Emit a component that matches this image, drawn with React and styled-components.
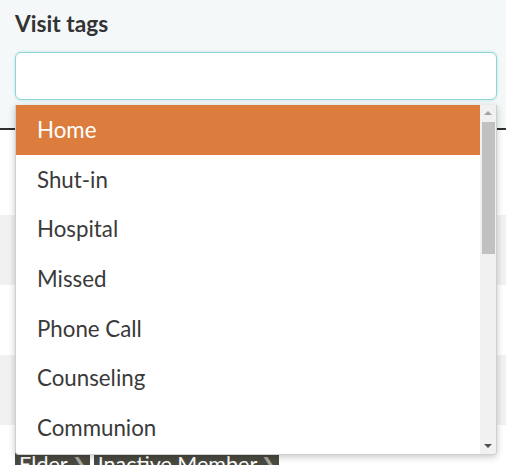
import React from 'react';
import styled, { createGlobalStyle } from 'styled-components';

const GlobalStyle = createGlobalStyle`
  html, body {
    margin: 0;
    padding: 0;
    background: #ffffff;
    font-family: Lato, "Open Sans", "Liberation Sans", sans-serif;
    overflow: hidden;
  }
`;

const Page = styled.div`
  position: relative;
  width: 506px;
  height: 465px;
  overflow: hidden;
  background: #ffffff;
`;

const Header = styled.div`
  background: #f4f8f9;
  padding: 11px 9px 0 15px;
  height: 117px;
  border-bottom: 2px solid #2f2f2f;
`;

const Label = styled.div`
  font-size: 22.7px;
  font-weight: 700;
  line-height: 26px;
  color: #333333;
`;

const Input = styled.div`
  margin-top: 15px;
  height: 46px;
  background: #ffffff;
  border: 1px solid #8fd4d4;
  border-radius: 6px;
  box-shadow: 0 0 3px rgba(110, 200, 200, 0.45);
`;

const Rows = styled.div`
  display: flex;
  flex-direction: column;
`;

const Row = styled.div`
  height: ${p => p.$h || 70}px;
  background: ${p => (p.$shade ? '#f1f1f1' : '#ffffff')};
  padding: 19px 15px 0;
  box-sizing: border-box;
`;

const Mark = styled.div`
  width: 22px;
  height: 24px;
  border: 2px solid #3a3a3a;
  border-radius: 2px;
  box-sizing: border-box;
`;

const Tags = styled.div`
  display: flex;
  gap: 4px;
  padding: 26px 15px 0;
`;

const Tag = styled.span`
  display: inline-flex;
  align-items: center;
  gap: 4px;
  background: #4a4a41;
  color: #ffffff;
  font-size: 21.5px;
  line-height: 26px;
  padding: 0 4px;
`;

const Chevron = styled.span`
  color: #a8a8a0;
  font-size: 17px;
`;

const Menu = styled.div`
  position: absolute;
  left: 15px;
  top: 105px;
  width: 482px;
  height: 350px;
  display: flex;
  background: #ffffff;
  border: 1px solid #cfcfcf;
  border-top: none;
  border-radius: 0 0 4px 4px;
  box-sizing: border-box;
  box-shadow: 0 2px 7px rgba(0, 0, 0, 0.22);
  overflow: hidden;
`;

const List = styled.ul`
  flex: 1;
  margin: 0;
  padding: 0;
  list-style: none;
  overflow: hidden;
`;

const Item = styled.li`
  height: 49.6px;
  display: flex;
  align-items: center;
  padding-left: 21px;
  font-size: 22.3px;
  color: ${p => (p.$active ? '#ffffff' : '#3a3a3a')};
  background: ${p => (p.$active ? '#dc7d3e' : 'transparent')};
`;

const Scrollbar = styled.div`
  width: 16px;
  background: #f1f1f1;
  display: flex;
  flex-direction: column;
  align-items: center;
`;

const Arrow = styled.div`
  height: 16px;
  width: 16px;
  display: flex;
  align-items: center;
  justify-content: center;
`;

const Thumb = styled.div`
  width: 13px;
  height: 132px;
  margin-top: 1px;
  background: #c1c1c1;
`;

const Spacer = styled.div`
  flex: 1;
`;

const tags = [
  'Home',
  'Shut-in',
  'Hospital',
  'Missed',
  'Phone Call',
  'Counseling',
  'Communion',
  'Nursing Home',
  'Email',
  'Letter',
  'Card',
  'Text Message',
  'Office Visit',
  'Funeral',
  'Wedding',
  'Baptism',
  'Other'
];

export default function App() {
  return (
    <Page>
      <GlobalStyle />
      <Header>
        <Label>Visit tags</Label>
        <Input />
      </Header>
      <Rows>
        <Row $h={85} />
        <Row $shade>
          <Mark />
        </Row>
        <Row>
          <Mark />
        </Row>
        <Row $shade>
          <Mark />
        </Row>
        <Tags>
          <Tag>
            Elder <Chevron>&#x276F;</Chevron>
          </Tag>
          <Tag>
            Inactive Member <Chevron>&#x276F;</Chevron>
          </Tag>
        </Tags>
      </Rows>
      <Menu>
        <List>
          {tags.map((t, i) => (
            <Item key={t} $active={i === 0}>
              {t}
            </Item>
          ))}
        </List>
        <Scrollbar>
          <Arrow>
            <svg width="8" height="4" viewBox="0 0 8 4">
              <path d="M0 4 L4 0 L8 4 Z" fill="#a3a3a3" />
            </svg>
          </Arrow>
          <Thumb />
          <Spacer />
          <Arrow>
            <svg width="8" height="4" viewBox="0 0 8 4">
              <path d="M0 0 L8 0 L4 4 Z" fill="#505050" />
            </svg>
          </Arrow>
        </Scrollbar>
      </Menu>
    </Page>
  );
}
